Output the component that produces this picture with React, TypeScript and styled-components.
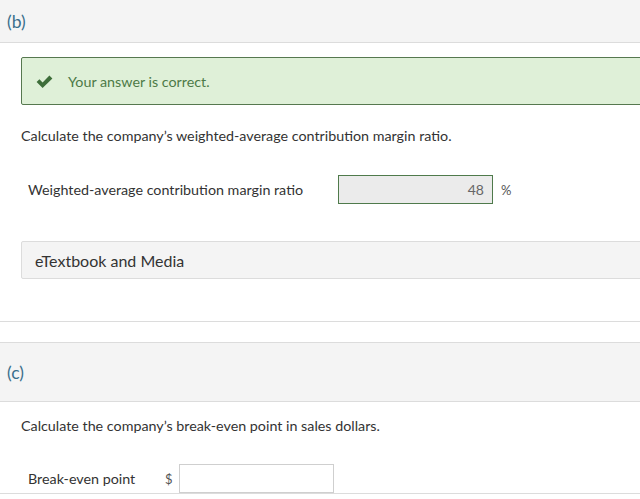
import React from 'react';
import styled, { createGlobalStyle } from 'styled-components';

const GlobalStyle = createGlobalStyle`
  html, body {
    margin: 0;
    padding: 0;
    background: #fff;
  }
  body {
    font-family: Lato, 'Open Sans', sans-serif;
    color: #333;
    overflow: hidden;
  }
`;

const Page = styled.div`
  width: 640px;
  height: 499px;
  overflow: hidden;
`;

const PartHeader = styled.div<{ topRule?: boolean }>`
  height: ${(props) => (props.topRule ? '58px' : '42px')};
  display: flex;
  align-items: center;
  padding-left: 7px;
  background: #f4f4f4;
  border-top: ${(props) => (props.topRule ? '1px solid #dcdcdc' : 'none')};
  border-bottom: 1px solid #dcdcdc;
  font-size: 17.5px;
  color: #3a6f8c;
`;

const PartBody = styled.div`
  padding: 14px 0 0 21px;
  border-bottom: 1px solid #dcdcdc;
`;

const Spacer = styled.div`
  height: 20px;
`;

const CorrectBox = styled.div`
  height: 46px;
  display: flex;
  align-items: center;
  gap: 15px;
  padding-left: 14px;
  margin-right: -4px;
  background: #dff0d8;
  border: 1px solid #56784f;
  border-radius: 2px;
  font-size: 14.3px;
  color: #4d7a47;
`;

const Question = styled.p<{ gap: number }>`
  margin: ${(props) => props.gap}px 0 0;
  line-height: 20px;
  font-size: 14.3px;
  color: #333;
`;

const AnswerRow = styled.div<{ gap: number }>`
  display: flex;
  align-items: center;
  margin-top: ${(props) => props.gap}px;
  padding-left: 7px;
  font-size: 14.3px;
  color: #333;
`;

const Label = styled.span<{ width: number }>`
  width: ${(props) => props.width}px;
  flex-shrink: 0;
`;

const Field = styled.div<{ locked?: boolean }>`
  width: 145px;
  height: 27px;
  display: flex;
  align-items: center;
  justify-content: flex-end;
  padding-right: 8px;
  box-sizing: content-box;
  background: ${(props) => (props.locked ? '#ebebeb' : '#fff')};
  border: 1px solid ${(props) => (props.locked ? '#4f7a4b' : '#cfcfcf')};
  font-size: 14px;
  color: #666;
`;

const Unit = styled.span<{ side: 'left' | 'right' }>`
  font-size: 13px;
  color: #555;
  ${(props) => (props.side === 'right' ? 'margin-left: 8px;' : 'margin-right: 6px;')}
`;

const MediaBox = styled.div`
  height: 36px;
  margin-top: 37px;
  margin-bottom: 42px;
  margin-right: -4px;
  display: flex;
  align-items: center;
  padding-left: 13px;
  background: #f4f4f4;
  border: 1px solid #dcdcdc;
  border-radius: 2px;
  font-size: 16px;
  color: #333;
`;

const CheckIcon = () => (
  <svg width="17" height="13" viewBox="0 0 17 13">
    <path d="M0.6 7 L3.4 4.2 L6.6 7.4 L13.4 0.6 L16.4 3.4 L6.6 13 Z" fill="#3e6e3a" />
  </svg>
);

export default function App() {
  return (
    <Page>
      <GlobalStyle />
      <PartHeader>(b)</PartHeader>
      <PartBody>
        <CorrectBox>
          <CheckIcon />
          <span>Your answer is correct.</span>
        </CorrectBox>
        <Question gap={21}>Calculate the company’s weighted-average contribution margin ratio.</Question>
        <AnswerRow gap={29}>
          <Label width={310}>Weighted-average contribution margin ratio</Label>
          <Field locked>48</Field>
          <Unit side="right">%</Unit>
        </AnswerRow>
        <MediaBox>eTextbook and Media</MediaBox>
      </PartBody>
      <Spacer />
      <PartHeader topRule>(c)</PartHeader>
      <PartBody>
        <Question gap={0}>Calculate the company’s break-even point in sales dollars.</Question>
        <AnswerRow gap={28}>
          <Label width={137}>Break-even point</Label>
          <Unit side="left">$</Unit>
          <Field />
        </AnswerRow>
      </PartBody>
    </Page>
  );
}
